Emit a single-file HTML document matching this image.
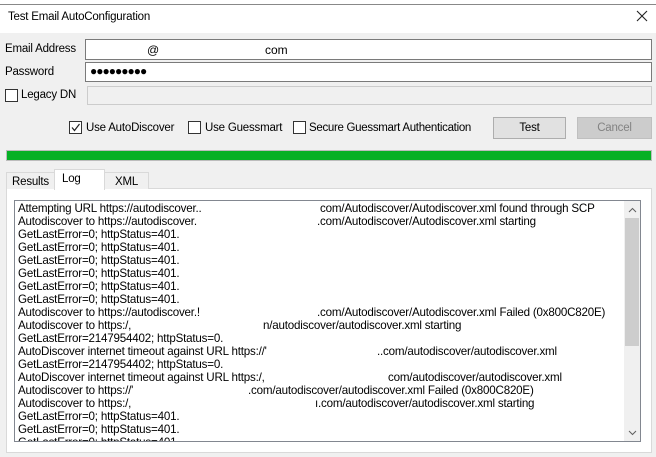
<!DOCTYPE html>
<html><head><style>
body{margin:0;width:656px;height:457px;overflow:hidden;background:#f0f0f0;font-family:"Liberation Sans",sans-serif;font-size:12px;color:#000;position:relative}
.a{position:absolute;white-space:nowrap}
.s{font-size:11.5px;letter-spacing:-0.2px}
.inp{position:absolute;background:#fff;border:1px solid #7a7a7a;box-sizing:border-box}
.cb{position:absolute;width:12px;height:12px;border:1px solid #333;background:#fff;box-sizing:border-box}
.btn{position:absolute;border:1px solid #adadad;background:#e1e1e1;box-sizing:border-box;text-align:center;line-height:20px}
.log span{position:absolute;white-space:nowrap;font-size:11.6px;letter-spacing:-0.2px}
</style></head><body>
<div class="a" style="left:0;top:0;width:656px;height:33px;background:#fff"></div>
<div class="a" style="left:0;top:0;width:656px;height:4px;background:#fff;border-bottom:1px solid #888"></div>
<div class="a s" style="left:8px;top:11px">Test Email AutoConfiguration</div>
<svg class="a" style="left:636px;top:10px" width="12" height="12"><path d="M1 1L11 11M11 1L1 11" stroke="#222" stroke-width="1.1"/></svg>

<div class="a s" style="left:5px;top:43px">Email Address</div>
<div class="inp" style="left:85px;top:39px;width:567px;height:21px"></div>
<div class="a" style="left:147px;top:43px">@</div>
<div class="a" style="left:265px;top:43px">com</div>
<div class="a s" style="left:5px;top:66px">Password</div>
<div class="inp" style="left:85px;top:62px;width:567px;height:20px"></div>
<div class="a" style="left:90px;top:64px;font-size:12px;letter-spacing:-1px;font-weight:bold">●●●●●●●●●</div>
<div class="cb" style="left:5px;top:89px;width:13px;height:13px"></div>
<div class="a s" style="left:21px;top:89px">Legacy DN</div>
<div class="inp" style="left:87px;top:86px;width:565px;height:19px;background:#f0f0f0;border-color:#ccc"></div>

<div class="cb" style="left:69px;top:121px;width:13px;height:13px"></div>
<svg class="a" style="left:70px;top:122px" width="11" height="11"><path d="M2 5.5 L4.5 8.5 L9.5 2" stroke="#222" stroke-width="1.2" fill="none"/></svg>
<div class="a s" style="left:86px;top:122px">Use AutoDiscover</div>
<div class="cb" style="left:188px;top:121px;width:13px;height:13px"></div>
<div class="a s" style="left:205px;top:122px">Use Guessmart</div>
<div class="cb" style="left:293px;top:121px;width:13px;height:13px"></div>
<div class="a s" style="left:309px;top:122px;letter-spacing:-0.3px">Secure Guessmart Authentication</div>
<div class="btn s" style="left:493px;top:117px;width:73px;height:22px">Test</div>
<div class="btn s" style="left:577px;top:117px;width:75px;height:22px;border-color:#bfbfbf;background:#ccc;color:#838383">Cancel</div>

<div class="a" style="left:6px;top:150px;width:646px;height:11px;background:#e6e6e6;border:1px solid #bcbcbc;box-sizing:border-box"></div>
<div class="a" style="left:7px;top:151px;width:644px;height:9px;background:#06b025"></div>

<div class="a" style="left:6px;top:188px;width:646px;height:265px;background:#fff;border:1px solid #d9d9d9;box-sizing:border-box"></div>
<div class="a s" style="left:6px;top:172px;width:49px;height:17px;border:1px solid #d9d9d9;border-bottom:none;background:#f0f0f0;box-sizing:border-box;text-align:center;line-height:18px">Results</div>
<div class="a s" style="left:104px;top:172px;width:45px;height:17px;border:1px solid #d9d9d9;border-bottom:none;background:#f0f0f0;box-sizing:border-box;text-align:center;line-height:18px">XML</div>
<div class="a s" style="left:54px;top:169px;width:51px;height:21px;border:1px solid #d9d9d9;border-bottom:none;background:#fff;box-sizing:border-box;padding-left:7px;line-height:18px">Log</div>

<div class="a" style="left:14px;top:200px;width:627px;height:242px;border:1px solid #828790;box-sizing:border-box;background:#fff;overflow:hidden" >
<div class="log" style="position:absolute;left:3px;top:0;width:605px;height:240px;overflow:hidden">
<span style="left:0;top:1px">Attempting URL https://autodiscover..</span><span style="left:302px;top:1px">com/Autodiscover/Autodiscover.xml found through SCP</span>
<span style="left:0;top:14px">Autodiscover to https://autodiscover.</span><span style="left:299px;top:14px">.com/Autodiscover/Autodiscover.xml starting</span>
<span style="left:0;top:27px">GetLastError=0; httpStatus=401.</span>
<span style="left:0;top:40px">GetLastError=0; httpStatus=401.</span>
<span style="left:0;top:53px">GetLastError=0; httpStatus=401.</span>
<span style="left:0;top:66px">GetLastError=0; httpStatus=401.</span>
<span style="left:0;top:79px">GetLastError=0; httpStatus=401.</span>
<span style="left:0;top:92px">GetLastError=0; httpStatus=401.</span>
<span style="left:0;top:105px">Autodiscover to https://autodiscover.!</span><span style="left:299px;top:105px">.com/Autodiscover/Autodiscover.xml Failed (0x800C820E)</span>
<span style="left:0;top:118px">Autodiscover to https:/,</span><span style="left:245px;top:118px">n/autodiscover/autodiscover.xml starting</span>
<span style="left:0;top:131px">GetLastError=2147954402; httpStatus=0.</span>
<span style="left:0;top:144px">AutoDiscover internet timeout against URL https://'</span><span style="left:359px;top:144px">..com/autodiscover/autodiscover.xml</span>
<span style="left:0;top:157px">GetLastError=2147954402; httpStatus=0.</span>
<span style="left:0;top:170px">AutoDiscover internet timeout against URL https:/,</span><span style="left:370px;top:170px">com/autodiscover/autodiscover.xml</span>
<span style="left:0;top:183px">Autodiscover to https://'</span><span style="left:230px;top:183px">.com/autodiscover/autodiscover.xml Failed (0x800C820E)</span>
<span style="left:0;top:196px">Autodiscover to https:/,</span><span style="left:297px;top:196px">ı.com/autodiscover/autodiscover.xml starting</span>
<span style="left:0;top:209px">GetLastError=0; httpStatus=401.</span>
<span style="left:0;top:222px">GetLastError=0; httpStatus=401.</span>
<span style="left:0;top:235px">GetLastError=0; httpStatus=401.</span>
</div>
<div style="position:absolute;left:609px;top:0;width:16px;height:240px;background:#f0f0f0"></div>
<div style="position:absolute;left:610px;top:17px;width:14px;height:128px;background:#cdcdcd"></div>
<svg style="position:absolute;left:613px;top:6px" width="9" height="6"><path d="M1 5L4.5 1.5L8 5" stroke="#606060" fill="none"/></svg>
<svg style="position:absolute;left:613px;top:229px" width="9" height="6"><path d="M1 1L4.5 4.5L8 1" stroke="#606060" fill="none"/></svg>
</div>
</body></html>
